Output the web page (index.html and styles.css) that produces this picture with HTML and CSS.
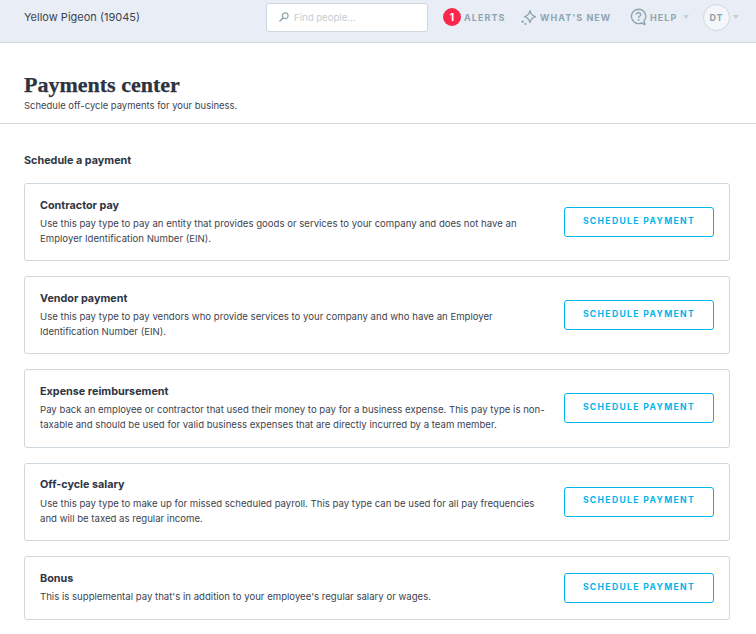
FILE: index.html
```html
<!DOCTYPE html>
<html lang="en">
<head>
<meta charset="utf-8">
<title>Payments center</title>
<link rel="stylesheet" href="styles.css">
</head>
<body>
<header class="topbar">
  <div class="company">Yellow Pigeon (19045)</div>
  <div class="search">
    <svg class="search-icon" width="10" height="10" viewBox="0 0 10 10" aria-hidden="true"><circle cx="6.2" cy="3.8" r="2.9" fill="none" stroke="#8fa3ad" stroke-width="1.2"/><path d="M4 6 L1 9" stroke="#8fa3ad" stroke-width="1.6" stroke-linecap="round"/></svg>
    <span>Find people...</span>
  </div>
  <nav class="nav">
    <div class="nav-item alerts"><span class="badge">1</span><span>ALERTS</span></div>
    <div class="nav-item news">
      <svg width="17" height="17" viewBox="0 0 17 17" aria-hidden="true"><path d="M10 1.5 C10.6 5.2 11.8 6.6 15.5 7.6 C12 8.6 10.8 10 10 13.6 C9.2 10 8 8.6 4.5 7.6 C8 6.6 9.4 5.2 10 1.5 Z" fill="none" stroke="#8fa5af" stroke-width="1.4" stroke-linejoin="round"/><circle cx="2.6" cy="12.6" r="1.2" fill="#8fa5af"/><circle cx="5.4" cy="15" r="1.1" fill="#8fa5af"/></svg>
      <span>WHAT'S NEW</span>
    </div>
    <div class="nav-item help">
      <svg width="17" height="18" viewBox="0 0 17 18" aria-hidden="true"><path d="M8.5 1.2 A7.2 7.2 0 1 0 11.5 15 L15 16.5 L14 13 A7.2 7.2 0 0 0 8.5 1.2 Z" fill="none" stroke="#8fa5af" stroke-width="1.4" stroke-linejoin="round"/><path d="M6.3 6.6 C6.3 4.2 10.7 4.2 10.7 6.6 C10.7 8.4 8.5 8.2 8.5 10" fill="none" stroke="#8fa5af" stroke-width="1.4"/><circle cx="8.5" cy="12" r="1" fill="#8fa5af"/></svg>
      <span>HELP</span><i class="caret"></i>
    </div>
    <div class="nav-item user"><span class="avatar">DT</span><i class="caret"></i></div>
  </nav>
</header>

<section class="page-head">
  <h1>Payments center</h1>
  <p>Schedule off-cycle payments for your business.</p>
</section>

<main class="content">
  <h2>Schedule a payment</h2>
  <article class="card">
    <div class="card-text">
      <h3>Contractor pay</h3>
      <p>Use this pay type to pay an entity that provides goods or services to your company and does not have an Employer Identification Number (EIN).</p>
    </div>
    <button class="btn">SCHEDULE PAYMENT</button>
  </article>
  <article class="card">
    <div class="card-text">
      <h3>Vendor payment</h3>
      <p>Use this pay type to pay vendors who provide services to your company and who have an Employer Identification Number (EIN).</p>
    </div>
    <button class="btn">SCHEDULE PAYMENT</button>
  </article>
  <article class="card">
    <div class="card-text">
      <h3>Expense reimbursement</h3>
      <p>Pay back an employee or contractor that used their money to pay for a business expense. This pay type is non-taxable and should be used for valid business expenses that are directly incurred by a team member.</p>
    </div>
    <button class="btn">SCHEDULE PAYMENT</button>
  </article>
  <article class="card">
    <div class="card-text">
      <h3>Off-cycle salary</h3>
      <p>Use this pay type to make up for missed scheduled payroll. This pay type can be used for all pay frequencies and will be taxed as regular income.</p>
    </div>
    <button class="btn">SCHEDULE PAYMENT</button>
  </article>
  <article class="card">
    <div class="card-text">
      <h3>Bonus</h3>
      <p>This is supplemental pay that's in addition to your employee's regular salary or wages.</p>
    </div>
    <button class="btn">SCHEDULE PAYMENT</button>
  </article>
</main>
</body>
</html>
```
FILE: styles.css
```css
* { box-sizing: border-box; }
html, body { margin: 0; padding: 0; }
body {
  background: #fff;
  color: #2f3542;
  font-family: "Inter", "Liberation Sans", sans-serif;
  font-size: 9.4px;
  overflow: hidden;
}
.topbar {
  height: 43px;
  background: #e9eef6;
  border-bottom: 1px solid #cdd7dd;
  display: flex;
  align-items: center;
  padding: 0 14px 8px 24px;
}
.company {
  width: 242px;
  font-size: 11px;
  color: #3d4450;
}
.search {
  width: 162px;
  height: 29px;
  background: #fff;
  border: 1px solid #cdd7dd;
  border-radius: 3px;
  display: flex;
  align-items: center;
  gap: 5px;
  padding-left: 12px;
  color: #c3ced5;
  font-size: 9.6px;
}
.nav {
  display: flex;
  align-items: center;
  margin-left: 15px;
  font-size: 9px;
  font-weight: 700;
  letter-spacing: 1.05px;
  color: #8fa5af;
}
.nav-item { display: flex; align-items: center; }
.alerts { gap: 3px; width: 77px; }
.news { gap: 3px; width: 110px; }
.help { gap: 3px; width: 73px; }
.badge {
  width: 18px;
  height: 18px;
  border-radius: 50%;
  background: #f8274b;
  color: #fff;
  font-size: 10px;
  letter-spacing: 0;
  display: flex;
  align-items: center;
  justify-content: center;
}
.avatar {
  width: 27px;
  height: 27px;
  border-radius: 50%;
  background: #f4f6fa;
  border: 1px solid #cdd7dd;
  display: flex;
  align-items: center;
  justify-content: center;
  letter-spacing: 0.8px;
}
.caret {
  width: 0;
  height: 0;
  border: 3.5px solid transparent;
  border-top: 4px solid #c6d0d7;
  border-bottom: 0;
  margin-left: 3px;
}
.page-head {
  height: 81px;
  padding: 31px 24px 0;
  border-bottom: 1px solid #cdd7dd;
}
.page-head h1 {
  margin: 0;
  font-family: "Liberation Serif", serif;
  font-weight: 700;
  font-size: 22px;
  line-height: 22px;
  color: #2d3340;
  -webkit-text-stroke: 0.25px #2d3340;
}
.page-head p {
  margin: 3px 0 0;
  font-size: 9.45px;
  line-height: 13px;
  color: #3d4450;
}
.content { padding: 30px 26px 0 24px; }
.content h2 {
  margin: 0 0 16px;
  font-size: 10.8px;
  line-height: 13px;
  font-weight: 700;
}
.card {
  height: 78.2px;
  border: 1px solid #cdd7dd;
  border-radius: 3px;
  margin-bottom: 15px;
  padding: 14px 15px;
  display: flex;
  align-items: center;
  justify-content: space-between;
}
.card:last-child { height: 64px; }
.card-text { width: 510px; }
.card h3 {
  margin: 0.6px 0 3.4px;
  font-size: 10.8px;
  line-height: 14px;
  font-weight: 700;
}
.card p {
  margin: 0;
  font-size: 9.6px;
  line-height: 15px;
  color: #3d4450;
}
.btn {
  width: 150px;
  height: 30px;
  flex: none;
  background: #fff;
  border: 1px solid #00b5ec;
  border-radius: 3px;
  color: #00b5ec;
  font-family: inherit;
  font-size: 8.6px;
  font-weight: 700;
  letter-spacing: 1.35px;
  padding: 0 0 2.4px;
}
```
